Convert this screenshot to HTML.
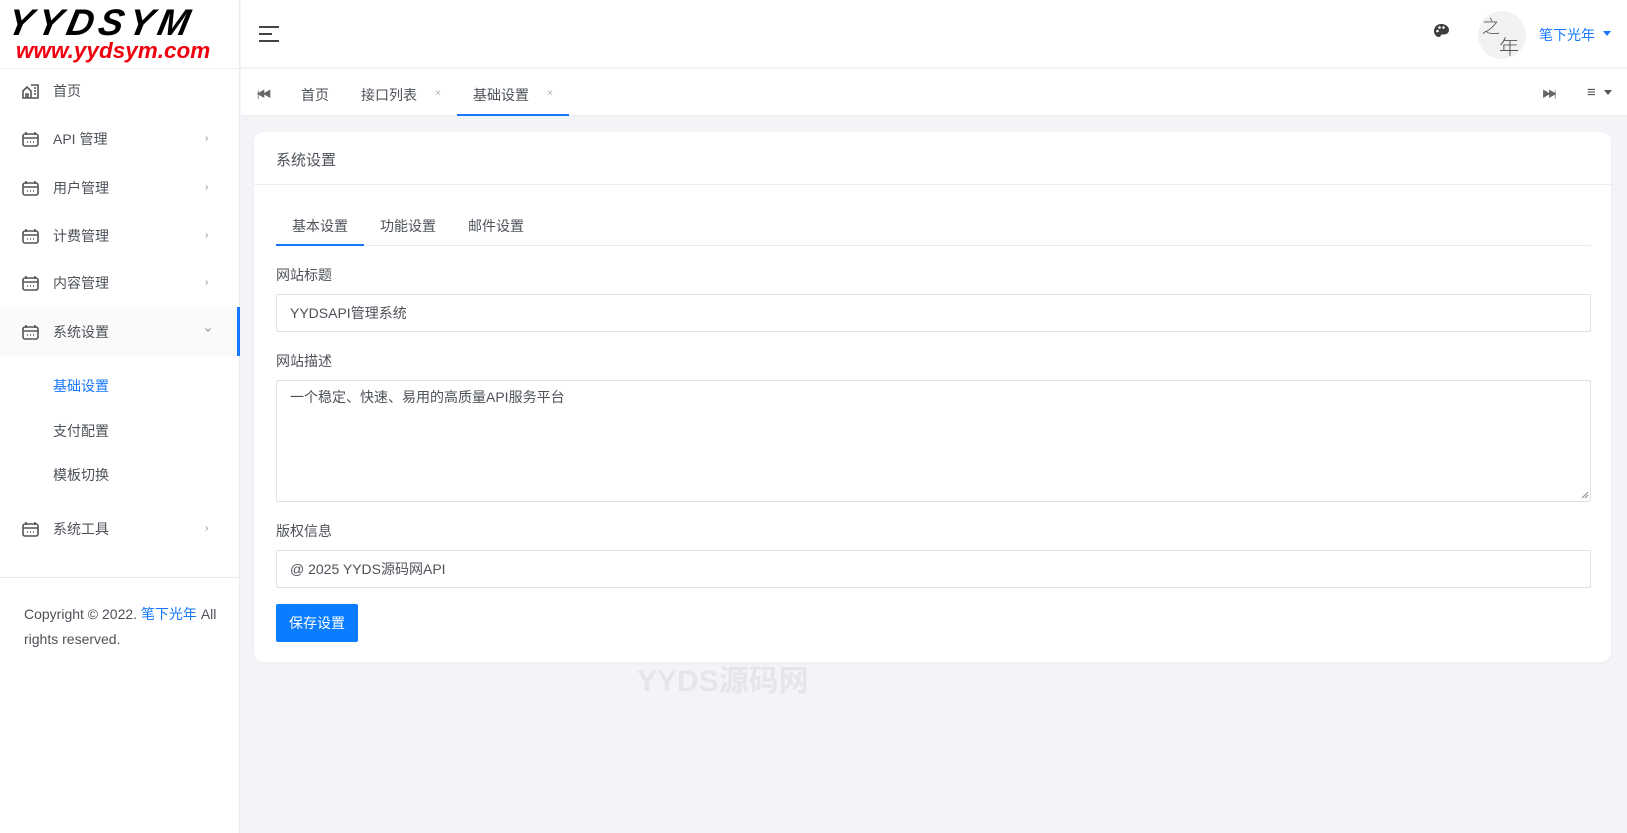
<!DOCTYPE html>
<html><head><meta charset="utf-8"><style>
*{margin:0;padding:0;box-sizing:border-box}
body{width:1627px;height:833px;overflow:hidden;background:#f3f4f8;font-family:"Liberation Sans","Noto Sans CJK SC",sans-serif;font-size:14px;color:#4d5259;position:relative}
.a{position:absolute}
.side{left:0;top:0;width:240px;height:833px;background:#fff;border-right:1px solid #ebebeb}
.mi{position:absolute;left:0;width:240px;height:20px;line-height:20px}
.mi svg{position:absolute;left:22px;top:2px}
.mi span{position:absolute;left:53px;color:#4d5259}
.mi i{position:absolute;left:205px;font-style:normal;font-size:10px;color:#888}
.sub{position:absolute;left:53px;line-height:20px}
</style></head><body>
<div class="a side">
 <div class="a" style="left:8px;top:2px;font:italic 900 37px 'Liberation Sans',sans-serif;letter-spacing:5px;color:#000;transform:skewX(-12deg)">YYDSYM</div>
 <div class="a" style="left:16px;top:38px;font:italic bold 22.5px 'Liberation Sans',sans-serif;color:#f0000f">www.yydsym.com</div>
 <div class="a" style="left:0;top:68px;width:240px;border-top:1px solid #f0f0f0"></div>
 <div class="mi" style="top:81px"><svg width="17" height="16" viewBox="0 0 17 16" fill="none" stroke="#555" stroke-width="1.6"><path d="M1 15V8l4-4 4 4v7H1zM9 2h7v13H9M4 15v-4h2v4M12 5h2M12 8h2M12 11h2"/></svg><span>首页</span></div>
 <div class="mi" style="top:129px"><svg width="17" height="16" viewBox="0 0 17 16" fill="none" stroke="#555" stroke-width="1.6"><rect x="1" y="3" width="15" height="12" rx="2"/><path d="M4 1v3M13 1v3M1 7h15M5 11h1M8 11h1M11 11h1"/></svg><span>API 管理</span><i>›</i></div>
 <div class="mi" style="top:178px"><svg width="17" height="16" viewBox="0 0 17 16" fill="none" stroke="#555" stroke-width="1.6"><rect x="1" y="3" width="15" height="12" rx="2"/><path d="M4 1v3M13 1v3M1 7h15M5 11h1M8 11h1M11 11h1"/></svg><span>用户管理</span><i>›</i></div>
 <div class="mi" style="top:226px"><svg width="17" height="16" viewBox="0 0 17 16" fill="none" stroke="#555" stroke-width="1.6"><rect x="1" y="3" width="15" height="12" rx="2"/><path d="M4 1v3M13 1v3M1 7h15M5 11h1M8 11h1M11 11h1"/></svg><span>计费管理</span><i>›</i></div>
 <div class="mi" style="top:273px"><svg width="17" height="16" viewBox="0 0 17 16" fill="none" stroke="#555" stroke-width="1.6"><rect x="1" y="3" width="15" height="12" rx="2"/><path d="M4 1v3M13 1v3M1 7h15M5 11h1M8 11h1M11 11h1"/></svg><span>内容管理</span><i>›</i></div>
 <div class="a" style="left:0;top:307px;width:240px;height:49px;background:#fafafa"></div>
 <div class="a" style="left:237px;top:307px;width:3px;height:49px;background:#1677ff"></div>
 <div class="mi" style="top:322px"><svg width="17" height="16" viewBox="0 0 17 16" fill="none" stroke="#555" stroke-width="1.6"><rect x="1" y="3" width="15" height="12" rx="2"/><path d="M4 1v3M13 1v3M1 7h15M5 11h1M8 11h1M11 11h1"/></svg><span>系统设置</span><svg style="left:205px;top:6px" width="6" height="4"><path d="M0.5 0.5l2.5 2.5 2.5-2.5" stroke="#888" fill="none"/></svg></div>
 <div class="sub" style="top:376px;color:#1677ff">基础设置</div>
 <div class="sub" style="top:421px">支付配置</div>
 <div class="sub" style="top:465px">模板切换</div>
 <div class="mi" style="top:519px"><svg width="17" height="16" viewBox="0 0 17 16" fill="none" stroke="#555" stroke-width="1.6"><rect x="1" y="3" width="15" height="12" rx="2"/><path d="M4 1v3M13 1v3M1 7h15M5 11h1M8 11h1M11 11h1"/></svg><span>系统工具</span><i>›</i></div>
 <div class="a" style="left:0;top:577px;width:240px;border-top:1px solid #ebebeb"></div>
 <div class="a" style="left:24px;top:602px;width:200px;line-height:25px;font-size:14px;color:#4d5259">Copyright © 2022. <span style="color:#1677ff">笔下光年</span> All rights reserved.</div>
</div>
<div class="a" style="left:241px;top:0;width:1386px;height:68px;background:#fff;border-bottom:1px solid #f0f0f0"></div>
<svg class="a" style="left:259px;top:26px" width="22" height="16"><path d="M0 1h20M0 8h13M0 15h20" stroke="#444" stroke-width="2"/></svg>
<svg class="a" style="left:1433px;top:23px" width="17" height="16" viewBox="0 0 17 16"><path d="M8.5 1C4 1 1 4 1 8c0 3 2 6 5 6 2 0 1.5-2.5 3-2.5h2c3 0 5-2 5-4.5C16 3.5 12.5 1 8.5 1z" fill="#3c3c3c"/><circle cx="4.5" cy="8" r="1.3" fill="#fff"/><circle cx="6.5" cy="4.5" r="1.3" fill="#fff"/><circle cx="10.5" cy="4.5" r="1.3" fill="#fff"/></svg>
<div class="a" style="left:1478px;top:11px;width:48px;height:48px;border-radius:50%;background:#f2f2f2"></div>
<div class="a" style="left:1482px;top:13px;color:#555;font-size:18px;font-weight:300">之</div>
<div class="a" style="left:1499px;top:31px;color:#555;font-size:20px;font-weight:300">年</div>
<div class="a" style="left:1539px;top:25px;color:#1677ff;font-size:14px">笔下光年</div>
<div class="a" style="left:1603px;top:31px;border:4px solid transparent;border-top:5px solid #1677ff"></div>
<div class="a" style="left:241px;top:69px;width:1386px;height:47px;background:#fff;border-bottom:1px solid #eee"></div>
<div class="a" style="left:257px;top:87px;font-size:9px;color:#666;letter-spacing:-3px">|◀◀</div>
<div class="a" style="left:301px;top:85px">首页</div>
<div class="a" style="left:361px;top:85px">接口列表</div>
<div class="a" style="left:435px;top:88px;font-size:10px;color:#aaa">×</div>
<div class="a" style="left:473px;top:85px">基础设置</div>
<div class="a" style="left:547px;top:88px;font-size:10px;color:#aaa">×</div>
<div class="a" style="left:457px;top:114px;width:112px;height:2px;background:#1677ff"></div>
<div class="a" style="left:1542px;top:87px;font-size:9px;color:#666;letter-spacing:-3px">▶▶|</div>
<div class="a" style="left:1587px;top:84px;font-size:15px;color:#555">≡</div>
<div class="a" style="left:1604px;top:90px;border:4px solid transparent;border-top:5px solid #555"></div>
<div class="a" style="left:254px;top:132px;width:1357px;height:530px;background:#fff;border-radius:10px;box-shadow:0 1px 3px rgba(0,0,0,.04)"></div>
<div class="a" style="left:276px;top:149px;font-size:15px">系统设置</div>
<div class="a" style="left:254px;top:184px;width:1357px;border-top:1px solid #eceef1"></div>
<div class="a" style="left:292px;top:216px">基本设置</div>
<div class="a" style="left:380px;top:216px">功能设置</div>
<div class="a" style="left:468px;top:216px">邮件设置</div>
<div class="a" style="left:276px;top:245px;width:1315px;border-top:1px solid #ebebeb"></div>
<div class="a" style="left:276px;top:244px;width:88px;height:2px;background:#1677ff"></div>
<div class="a" style="left:276px;top:265px">网站标题</div>
<div class="a" style="left:276px;top:294px;width:1315px;height:38px;border:1px solid #dfe1e6;border-radius:2px;padding:0 13px;line-height:36px">YYDSAPI管理系统</div>
<div class="a" style="left:276px;top:351px">网站描述</div>
<div class="a" style="left:276px;top:380px;width:1315px;height:122px;border:1px solid #dfe1e6;border-radius:2px;padding:6px 13px;line-height:20px">一个稳定、快速、易用的高质量API服务平台</div>
<svg class="a" style="left:1581px;top:491px" width="8" height="8"><path d="M1 7L7 1M4 7L7 4" stroke="#888"/></svg>
<div class="a" style="left:276px;top:521px">版权信息</div>
<div class="a" style="left:276px;top:550px;width:1315px;height:38px;border:1px solid #dfe1e6;border-radius:2px;padding:0 13px;line-height:36px">@ 2025 YYDS源码网API</div>
<div class="a" style="left:276px;top:604px;width:82px;height:38px;background:#0a7cff;border-radius:2px;color:#fff;text-align:center;line-height:38px">保存设置</div>
<div class="a" style="left:637px;top:656px;font-size:30px;font-weight:bold;color:#e6e6e8">YYDS源码网</div>
</body></html>
